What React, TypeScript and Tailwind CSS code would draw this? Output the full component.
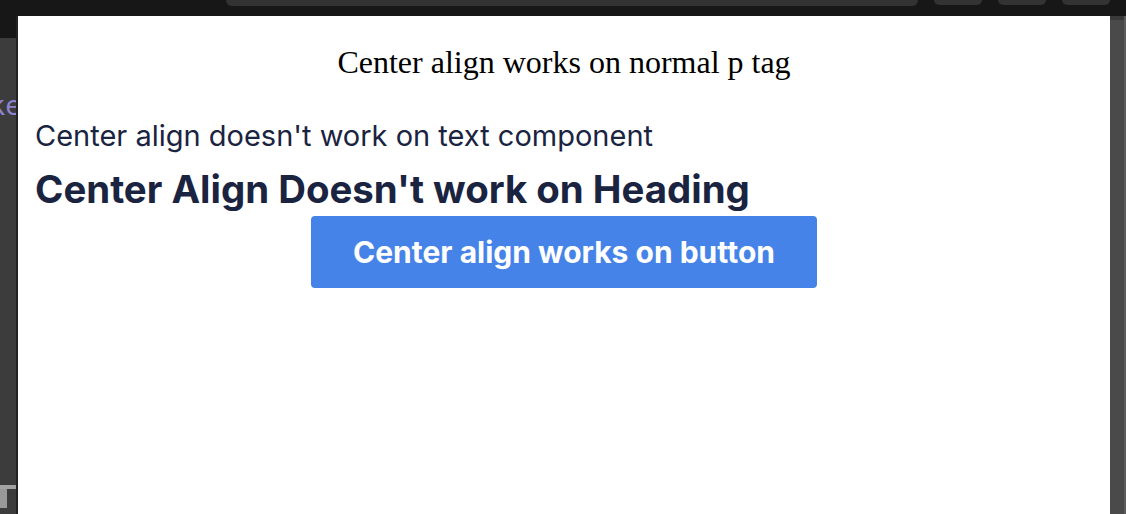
import React from 'react';

const sans = { fontFamily: 'Inter, "Noto Sans", sans-serif' };

const TopBar: React.FC = () => (
  <div className="flex h-4 shrink-0 bg-[#171717]">
    <div className="w-[226px]" />
    <div className="h-[6px] w-[692px] rounded-b-md bg-[#333333]" />
    <div className="ml-4 h-[5px] w-12 rounded-b-md bg-[#333333]" />
    <div className="ml-4 h-[5px] w-12 rounded-b-md bg-[#333333]" />
    <div className="ml-4 h-[5px] w-12 rounded-b-md bg-[#333333]" />
  </div>
);

const EditorGutter: React.FC = () => (
  <div className="flex w-[18px] shrink-0">
    <div className="flex w-4 flex-col overflow-hidden bg-[#3c3c3c]">
      <div className="h-[22px] bg-[#171717]" />
      <div className="mt-[52px] h-8 overflow-hidden">
        <span
          className="-ml-[11px] block whitespace-nowrap text-[27px] leading-8 text-[#8f84d0]"
          style={{ fontFamily: '"DejaVu Sans Mono", monospace' }}
        >
          ke
        </span>
      </div>
      <div className="flex-1" />
      <div className="h-1 bg-[#a3a3a3]" />
      <div className="h-[19px] w-[7px] bg-[#999999]" />
      <div className="h-[6px]" />
    </div>
    <div className="w-[2px] bg-[#232323]" />
  </div>
);

const Preview: React.FC = () => (
  <div className="flex-1 bg-white px-[17px] pt-[26px]">
    <p
      className="text-center text-[32px] leading-10 text-black"
      style={{ fontFamily: '"Liberation Serif", serif' }}
    >
      Center align works on normal p tag
    </p>
    <p className="mt-[36px] text-[29px] leading-9 text-[#1a2441]" style={sans}>
      Center align doesn't work on text component
    </p>
    <h2 className="mt-[13px] text-[38.4px] font-bold leading-[44px] text-[#1a2441]" style={sans}>
      Center Align Doesn't work on Heading
    </h2>
    <div className="mt-[5px] flex justify-center">
      <button
        className="h-[72px] w-[506px] rounded bg-[#4683e9] text-[30px] font-bold text-white"
        style={sans}
      >
        Center align works on button
      </button>
    </div>
  </div>
);

const RightRail: React.FC = () => (
  <div className="flex w-4 shrink-0">
    <div className="flex w-[14px] flex-col bg-[#4a4a4a]">
      <div className="h-1 bg-[#3a3a3a]" />
    </div>
    <div className="w-[2px] bg-[#5c5c5c]" />
  </div>
);

export default function App() {
  return (
    <div className="flex h-[514px] w-[1126px] flex-col overflow-hidden bg-[#171717]">
      <TopBar />
      <div className="flex flex-1">
        <EditorGutter />
        <Preview />
        <RightRail />
      </div>
    </div>
  );
}
